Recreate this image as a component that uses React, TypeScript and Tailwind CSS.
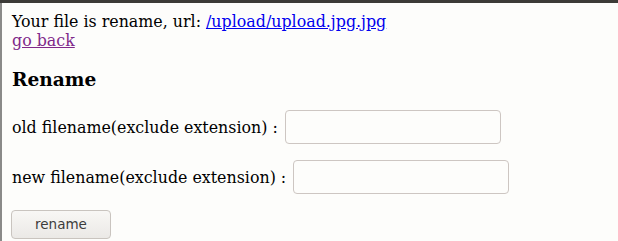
const App = () => {
  return (
    <div className="min-h-[241px] w-[618px] bg-[#3c3b37] pt-[3px]">
      <div className="min-h-[238px] border-l-2 border-[#8a8a88] bg-[#fdfdfb] px-[10px] pt-[9px] font-['DejaVu_Serif',serif] text-[15.85px] leading-[19px] text-black">
        {/* Result message */}
        <p>
          Your file is rename, url:{' '}
          <a href="#" className="text-[#0000ee] underline">
            /upload/upload.jpg.jpg
          </a>
        </p>
        <a href="#" className="text-[#80298a] underline">
          go back
        </a>

        <h3 className="mt-[19px] mb-[19px] text-[18.6px] font-bold leading-[22px]">Rename</h3>

        {/* Form */}
        <form className="flex flex-col gap-[16px]">
          <div className="flex items-center gap-[7px]">
            <span>old filename(exclude extension) :</span>
            <input className="h-[34px] w-[216px] rounded-[4px] border border-[#cdc6c2] bg-[#fdfdfb]" />
          </div>
          <div className="flex items-center gap-[7px]">
            <span>new filename(exclude extension) :</span>
            <input className="h-[34px] w-[216px] rounded-[4px] border border-[#cdc6c2] bg-[#fdfdfb]" />
          </div>
          <div>
            <button
              type="button"
              className="h-[29px] w-[100px] -translate-x-px rounded-[4px] border border-[#c9c4bf] bg-gradient-to-b from-[#f8f7f5] to-[#ebe9e6] font-['DejaVu_Sans',sans-serif] text-[13.5px] text-[#3c3c3c]"
            >
              rename
            </button>
          </div>
        </form>
      </div>
    </div>
  );
};

export default App;
